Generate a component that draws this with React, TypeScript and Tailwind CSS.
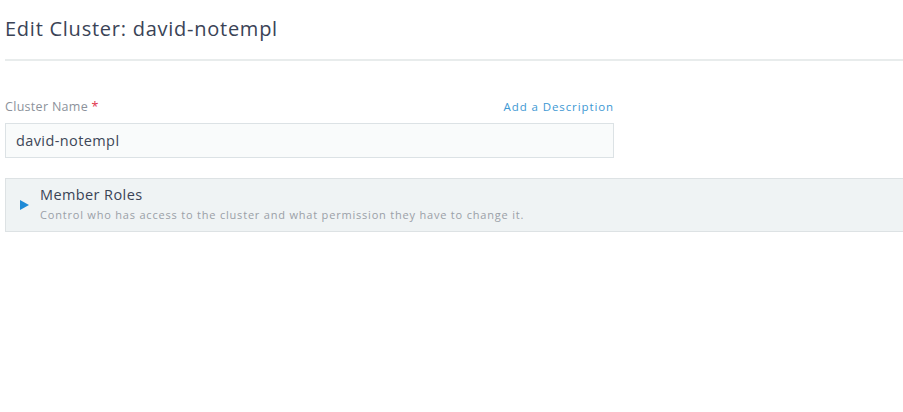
export default function App() {
  return (
    <div className="min-h-[412px] w-[903px] overflow-hidden bg-white font-['Open_Sans',sans-serif]">
      <div className="pl-[5px]">
        {/* Header */}
        <div className="pt-[14px] pb-[15px] border-b-2 border-[#e8ecec]">
          <h1 className="text-[20px] leading-[30px] tracking-[0.75px] text-[#3a4356] font-normal">
            Edit Cluster: david-notempl
          </h1>
        </div>

        {/* Cluster name */}
        <div className="w-[609px] mt-[36px]">
          <div className="flex items-center justify-between h-[20px]">
            <label className="text-[12.5px] tracking-[0.3px] text-[#8c929b]">
              Cluster Name <span className="text-[#e0334c]">*</span>
            </label>
            <a className="text-[11.5px] tracking-[0.9px] text-[#3d98d3]">Add a Description</a>
          </div>
          <div className="mt-[6px] h-[35px] flex items-center px-[10px] bg-[#f9fbfb] border border-[#dce2e5]">
            <span className="text-[14.5px] tracking-[0.4px] text-[#3d4758]">david-notempl</span>
          </div>
        </div>

        {/* Member roles accordion */}
        <div className="mt-[20px] h-[54px] flex items-center bg-[#eff3f4] border border-r-0 border-[#dde2e4]">
          <div className="w-[34px] flex justify-center pl-[2px]">
            <svg width="9" height="10" viewBox="0 0 9 10">
              <path d="M0 0 L9 5 L0 10 Z" fill="#1f8ad6" />
            </svg>
          </div>
          <div className="flex flex-col -mt-[3px]">
            <span className="text-[14.5px] leading-[20px] tracking-[0.4px] text-[#3a4356]">Member Roles</span>
            <span className="text-[11px] leading-[16px] mt-[2px] tracking-[0.8px] text-[#9aa0a7]">
              Control who has access to the cluster and what permission they have to change it.
            </span>
          </div>
        </div>
      </div>
    </div>
  )
}
